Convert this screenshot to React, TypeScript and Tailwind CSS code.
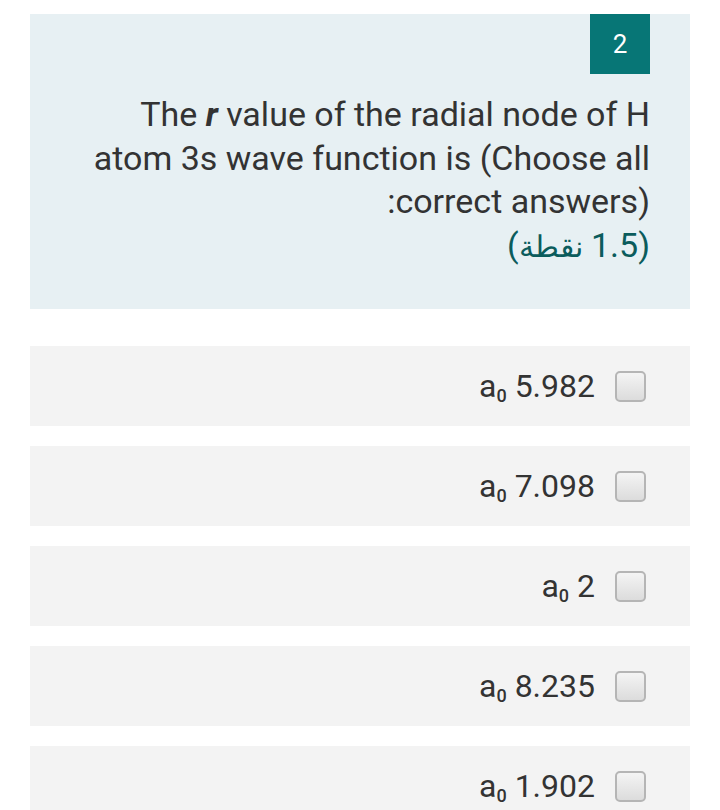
const options = ["5.982", "7.098", "2", "8.235", "1.902"];

const Checkbox = () => (
  <span className="block h-[31px] w-[31px] shrink-0 rounded-[5px] border-2 border-[#b5b5b5] bg-gradient-to-b from-[#f4f4f4] to-[#dcdcdc]" />
);

export default function App() {
  return (
    <div className="min-h-[810px] bg-white px-[30px] pt-[14px] font-['Roboto',sans-serif] text-[#333]">
      <div className="bg-[#e7f0f3] pb-[41px]">
        <div className="flex justify-end pr-[40px]">
          <div className="flex h-[60px] w-[60px] items-center justify-center bg-[#077676] text-[26px] text-white">
            2
          </div>
        </div>
        <div className="pr-[40px] pt-[19px] text-right text-[34px] leading-[43.5px]">
          <p>
            The <b className="italic">r</b> value of the radial node of H
            <br />
            atom 3s wave function is (Choose all
            <br />
            :correct answers)
          </p>
          <p dir="rtl" className="text-[#0b5c5c]">
            (1.5 <span className="text-[30px]">نقطة</span>)
          </p>
        </div>
      </div>
      <div className="mt-[37px] flex flex-col gap-[20px]">
        {options.map((o) => (
          <div key={o} className="flex h-[80px] items-center justify-end gap-[20px] bg-[#f3f3f3] pr-[44px]">
            <span className="text-[32px] leading-none">
              a<sub className="text-[18px] font-medium">0</sub> {o}
            </span>
            <Checkbox />
          </div>
        ))}
      </div>
    </div>
  );
}
